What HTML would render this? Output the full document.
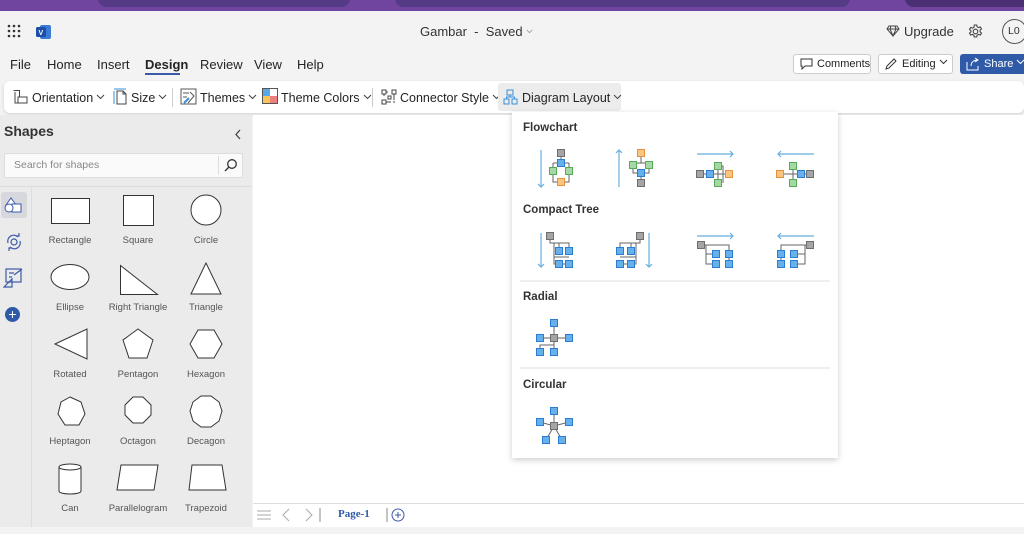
<!DOCTYPE html>
<html><head><meta charset="utf-8"><style>
*{margin:0;padding:0;box-sizing:border-box}
body{width:1024px;height:534px;overflow:hidden;background:#f3f3f3;font-family:"Liberation Sans",sans-serif;color:#242424;position:relative}
.a{position:absolute}
.t{font-size:12.5px;white-space:nowrap}
.cv{display:inline-block;width:9px;height:6px;margin-left:3px;vertical-align:2px}
.lbl{position:absolute;font-size:9.5px;color:#555;width:80px;text-align:center}
.hd{position:absolute;font-size:11.5px;font-weight:bold;color:#333}
</style></head><body>
<div class="a" style="left:0;top:0;width:1024px;height:11px;background:#70459f"></div>
<div class="a" style="left:98px;top:-10px;width:252px;height:17px;background:#553a85;border-radius:9px"></div>
<div class="a" style="left:395px;top:-10px;width:455px;height:17px;background:#553a85;border-radius:9px"></div>
<div class="a" style="left:905px;top:-10px;width:140px;height:17px;background:#4a2f73;border-radius:9px"></div>

<svg class="a" style="left:7px;top:24px" width="14" height="14"><g fill="#333"><circle cx="2" cy="2" r="1.3"/><circle cx="7" cy="2" r="1.3"/><circle cx="12" cy="2" r="1.3"/><circle cx="2" cy="7" r="1.3"/><circle cx="7" cy="7" r="1.3"/><circle cx="12" cy="7" r="1.3"/><circle cx="2" cy="12" r="1.3"/><circle cx="7" cy="12" r="1.3"/><circle cx="12" cy="12" r="1.3"/></g></svg>
<svg class="a" style="left:36px;top:24px" width="16" height="16"><rect x="4" y="1" width="11" height="14" rx="2" fill="#3a7bd5"/><rect x="0" y="3" width="10" height="10" rx="1.5" fill="#1d4fa6"/><text x="2.5" y="11" font-size="7" fill="#fff" font-family="Liberation Sans" font-weight="bold">V</text></svg>
<div class="a t" style="left:420px;top:24px;color:#333;font-size:13px">Gambar &nbsp;- &nbsp;Saved<svg class="cv" style="width:7px;height:5px" viewBox="0 0 9 6"><path d="M1 1l3.5 3.5L8 1" fill="none" stroke="#999"/></svg></div>
<svg class="a" style="left:886px;top:24px" width="14" height="14" fill="none" stroke="#444" stroke-width="1"><path d="M3 2h8l2 3-6 7-6-7z M1 5h12 M5 2l-1 3 3 7 3-7-1-3"/></svg>
<div class="a t" style="left:904px;top:24px;color:#333;font-size:13px">Upgrade</div>
<svg class="a" style="left:968px;top:24px" width="15" height="15" fill="none" stroke="#444" stroke-width="1.1"><circle cx="7.5" cy="7.5" r="2.3"/><path d="M6.3 1h2.4l.4 1.8 1.5.8 1.7-.7 1.2 2-1.4 1.2v1.8l1.4 1.2-1.2 2-1.7-.7-1.5.8-.4 1.8H6.3l-.4-1.8-1.5-.8-1.7.7-1.2-2 1.4-1.2V6.6L1.5 5.4l1.2-2 1.7.7 1.5-.8z"/></svg>
<div class="a" style="left:1002px;top:19px;width:25px;height:25px;border:1px solid #555;border-radius:50%;font-size:10.5px;line-height:23px;padding-left:5px;color:#333">L0</div>

<div class="a t" style="left:10px;top:57px;font-size:13px">File</div>
<div class="a t" style="left:47px;top:57px;font-size:13px">Home</div>
<div class="a t" style="left:97px;top:57px;font-size:13px">Insert</div>
<div class="a t" style="left:145px;top:57px;font-weight:bold;font-size:13px">Design</div>
<div class="a" style="left:145px;top:73px;width:35px;height:2px;background:#3b5aa8"></div>
<div class="a t" style="left:200px;top:57px;font-size:13px">Review</div>
<div class="a t" style="left:254px;top:57px;font-size:13px">View</div>
<div class="a t" style="left:297px;top:57px;font-size:13px">Help</div>

<div class="a" style="left:793px;top:54px;width:78px;height:20px;background:#fff;border:1px solid #ccc;border-radius:3px"></div>
<svg class="a" style="left:800px;top:58px" width="13" height="12" fill="none" stroke="#333"><path d="M1 1h11v7H5l-3 3V8H1z"/></svg>
<div class="a" style="left:817px;top:58px;font-size:11px">Comments</div>
<div class="a" style="left:878px;top:54px;width:75px;height:20px;background:#fff;border:1px solid #ccc;border-radius:3px"></div>
<svg class="a" style="left:884px;top:57px" width="14" height="14" fill="none" stroke="#333"><path d="M2 12l1-3 7-7 2 2-7 7z"/></svg>
<div class="a" style="left:902px;top:58px;font-size:11px;white-space:nowrap">Editing<svg class="cv" viewBox="0 0 9 6"><path d="M1 1l3.5 3.5L8 1" fill="none" stroke="#333"/></svg></div>
<div class="a" style="left:960px;top:54px;width:70px;height:20px;background:#2f5aa8;border-radius:3px"></div>
<svg class="a" style="left:966px;top:57px" width="14" height="14" fill="none" stroke="#fff"><path d="M1 5v8h11V9 M5 9c0-4 3-6 7-6 M9 1l3 2-3 2"/></svg>
<div class="a" style="left:984px;top:58px;font-size:11px;color:#fff;white-space:nowrap">Share<svg class="cv" viewBox="0 0 9 6"><path d="M1 1l3.5 3.5L8 1" fill="none" stroke="#fff"/></svg></div>

<div class="a" style="left:4px;top:81px;width:1020px;height:32px;background:#fff;border-radius:6px;box-shadow:0 1px 3px rgba(0,0,0,.15)"></div>
<svg class="a" style="left:12px;top:89px" width="16" height="16" fill="none" stroke="#444"><path d="M1.5 1.5h6v6 M3 3v11h3 M6 8h9v6H6z"/></svg>
<div class="a t" style="left:32px;top:91px">Orientation<svg class="cv" viewBox="0 0 9 6"><path d="M1 1l3.5 3.5L8 1" fill="none" stroke="#444"/></svg></div>
<svg class="a" style="left:113px;top:88px" width="15" height="17" fill="none" stroke="#444"><path d="M4 3h6l3 3v10H4z M10 3v3h3" /><path d="M1 1h12 M1 3v13" stroke="#3a8fd8"/></svg>
<div class="a t" style="left:131px;top:91px">Size<svg class="cv" viewBox="0 0 9 6"><path d="M1 1l3.5 3.5L8 1" fill="none" stroke="#444"/></svg></div>
<div class="a" style="left:172px;top:88px;width:1px;height:19px;background:#ccc"></div>
<svg class="a" style="left:180px;top:88px" width="17" height="17" fill="none" stroke="#555"><rect x="1" y="1" width="15" height="15"/><path d="M3 5h6 M3 9h4 M10 4l4 4-6 7"/><path d="M4 15l5-5" stroke="#3a8fd8" stroke-width="2"/></svg>
<div class="a t" style="left:200px;top:91px">Themes<svg class="cv" viewBox="0 0 9 6"><path d="M1 1l3.5 3.5L8 1" fill="none" stroke="#444"/></svg></div>
<svg class="a" style="left:262px;top:88px" width="16" height="16"><rect x="0.5" y="0.5" width="15" height="15" fill="#fff" stroke="#555"/><rect x="1" y="1" width="7" height="7" fill="#5aa9e6"/><rect x="8" y="1" width="7" height="7" fill="#fff"/><rect x="1" y="8" width="7" height="7" fill="#f7c55a"/><rect x="8" y="8" width="7" height="7" fill="#f08080"/></svg>
<div class="a t" style="left:281px;top:91px">Theme Colors<svg class="cv" viewBox="0 0 9 6"><path d="M1 1l3.5 3.5L8 1" fill="none" stroke="#444"/></svg></div>
<div class="a" style="left:372px;top:88px;width:1px;height:19px;background:#ccc"></div>
<svg class="a" style="left:381px;top:89px" width="16" height="16" fill="none" stroke="#444"><rect x="1" y="1" width="4" height="4"/><rect x="11" y="1" width="4" height="4"/><rect x="1" y="11" width="4" height="4"/><rect x="7" y="7" width="3" height="3"/><path d="M5 3h2 M3 5v2 M5 13h5 M13 5v6 M12 13h2"/></svg>
<div class="a t" style="left:400px;top:91px">Connector Style<svg class="cv" viewBox="0 0 9 6"><path d="M1 1l3.5 3.5L8 1" fill="none" stroke="#444"/></svg></div>
<div class="a" style="left:498px;top:83px;width:123px;height:28px;background:#ececec;border-radius:3px"></div>
<svg class="a" style="left:503px;top:89px" width="15" height="16" fill="none" stroke="#3a8fd8"><rect x="4" y="1" width="6" height="5"/><rect x="1" y="10" width="5" height="5"/><rect x="9" y="10" width="5" height="5"/><path d="M7 6v2H3.5v2 M7 8h4.5v2"/></svg>
<div class="a t" style="left:522px;top:91px">Diagram Layout<svg class="cv" viewBox="0 0 9 6"><path d="M1 1l3.5 3.5L8 1" fill="none" stroke="#444"/></svg></div>

<div class="a" style="left:0;top:115px;width:252px;height:412px;background:#ebebeb"></div>
<div class="a" style="left:4px;top:123px;font-size:14px;font-weight:bold;color:#333">Shapes</div>
<svg class="a" style="left:234px;top:129px" width="8" height="11" fill="none" stroke="#444" stroke-width="1.3"><path d="M6 1L2 5.5 6 10"/></svg>
<div class="a" style="left:4px;top:153px;width:239px;height:25px;background:#fafafa;border:1px solid #ddd;border-radius:2px"></div>
<div class="a" style="left:14px;top:159px;font-size:10.5px;color:#888">Search for shapes</div>
<div class="a" style="left:218px;top:156px;width:1px;height:19px;background:#ddd"></div>
<svg class="a" style="left:224px;top:158px" width="14" height="14" fill="none" stroke="#333" stroke-width="1.3"><circle cx="8" cy="6" r="4.3"/><path d="M5 9l-4 4"/></svg>
<div class="a" style="left:0;top:186px;width:252px;height:1px;background:#ddd"></div>
<div class="a" style="left:31px;top:187px;width:1px;height:340px;background:#ddd"></div>
<div class="a" style="left:1px;top:192px;width:26px;height:26px;background:#d7d7de;border-radius:3px"></div>
<svg class="a" style="left:4px;top:196px" width="20" height="18" fill="#fff" stroke="#3b5aa8"><path d="M2 9l5-7 5 7z"/><rect x="8" y="8" width="9" height="8"/><circle cx="5" cy="12" r="4"/></svg>
<svg class="a" style="left:4px;top:232px" width="20" height="20" fill="none" stroke="#3b5aa8" stroke-width="1.2"><path d="M4 11a6 6 0 0 1 10-6 M16 9a6 6 0 0 1-10 6 M12 4h3V1 M8 16H5v3"/><circle cx="10" cy="10" r="3"/></svg>
<svg class="a" style="left:3px;top:267px" width="22" height="22" fill="none" stroke="#3b5aa8" stroke-width="1.2"><rect x="3" y="2" width="15" height="13"/><path d="M1 20l8-8v8z M11 8l8-6 M6 6h5 M6 10h3"/></svg>
<div class="a" style="left:5px;top:307px;width:15px;height:15px;border-radius:50%;background:#2f5aa8;color:#fff;font-size:14px;line-height:14px;text-align:center">+</div>

<svg class="a" style="left:32px;top:187px" width="220" height="340" fill="#fff" stroke="#333" stroke-width="1">
<rect x="19.5" y="11.5" width="38" height="25"/>
<rect x="91.5" y="8.5" width="30" height="30"/>
<circle cx="174" cy="23" r="15"/>
<ellipse cx="38" cy="90" rx="19" ry="12.5"/>
<path d="M88.5 78.5v29h37z"/>
<path d="M174 76l-15 31h30z"/>
<path d="M23 157l32-15v30z"/>
<path d="M106 142l15 11-6 18h-18l-6-18z"/>
<path d="M166 143h16l8 14-8 14h-16l-8-14z"/>
<path d="M38 210l11 5 4 12-6 11h-14l-7-11 3-12z"/>
<path d="M101 210h10l8 8v10l-8 8h-10l-8-8v-10z"/>
<path d="M169 209h10l8 6 3 9-3 10-8 6h-10l-8-6-3-10 3-9z"/>
<path d="M27 280v24c0 4 22 4 22 0v-24"/><ellipse cx="38" cy="280" rx="11" ry="3"/>
<path d="M89 278h37l-4 25h-37z"/>
<path d="M160 278h30l4 25h-37z"/>
</svg>
<div class="lbl" style="left:30px;top:235px">Rectangle</div>
<div class="lbl" style="left:98px;top:235px">Square</div>
<div class="lbl" style="left:166px;top:235px">Circle</div>
<div class="lbl" style="left:30px;top:302px">Ellipse</div>
<div class="lbl" style="left:98px;top:302px">Right Triangle</div>
<div class="lbl" style="left:166px;top:302px">Triangle</div>
<div class="lbl" style="left:30px;top:369px">Rotated</div>
<div class="lbl" style="left:98px;top:369px">Pentagon</div>
<div class="lbl" style="left:166px;top:369px">Hexagon</div>
<div class="lbl" style="left:30px;top:436px">Heptagon</div>
<div class="lbl" style="left:98px;top:436px">Octagon</div>
<div class="lbl" style="left:166px;top:436px">Decagon</div>
<div class="lbl" style="left:30px;top:503px">Can</div>
<div class="lbl" style="left:98px;top:503px">Parallelogram</div>
<div class="lbl" style="left:166px;top:503px">Trapezoid</div>

<div class="a" style="left:253px;top:115px;width:771px;height:388px;background:#fff"></div>
<div class="a" style="left:253px;top:503px;width:771px;height:1px;background:#ddd"></div>
<div class="a" style="left:253px;top:504px;width:771px;height:23px;background:#fff"></div>
<svg class="a" style="left:256px;top:507px" width="150" height="16" fill="none" stroke="#aaa"><path d="M1 4h14 M1 8h14 M1 12h14 M33 2l-6 6 6 6 M50 2l6 6-6 6" /><path d="M64 1v14 M131 1v14" stroke="#888"/><circle cx="142" cy="8" r="6" stroke="#3b5aa8"/><path d="M142 5v6 M139 8h6" stroke="#3b5aa8"/></svg>
<div class="a" style="left:338px;top:508px;font-family:'Liberation Serif',serif;font-size:11px;font-weight:bold;color:#2f5aa8">Page-1</div>

<div class="a" style="left:512px;top:112px;width:326px;height:346px;background:#fff;box-shadow:0 2px 6px rgba(0,0,0,.2)"></div>
<div class="hd" style="left:523px;top:122px">Flowchart</div>
<div class="hd" style="left:523px;top:204px">Compact Tree</div>
<div class="hd" style="left:523px;top:291px">Radial</div>
<div class="hd" style="left:523px;top:379px">Circular</div>
<svg class="a" style="left:512px;top:112px" width="326" height="346">
<defs>
<g id="bl"><rect x="-3.5" y="-3.5" width="7" height="7" fill="#67b0ea" stroke="#2b7cd3"/></g>
<g id="gr"><rect x="-3.5" y="-3.5" width="7" height="7" fill="#a5a5a5" stroke="#6e6e6e"/></g>
<g id="gn"><rect x="-3.5" y="-3.5" width="7" height="7" fill="#a4d9a4" stroke="#5aa85a"/></g>
<g id="or"><rect x="-3.5" y="-3.5" width="7" height="7" fill="#f8c680" stroke="#e8913a"/></g>
</defs>
<path d="M8 169h310 M8 256h310" stroke="#ddd"/>
<g fill="none" stroke="#67aee0" stroke-width="1.2">
<path d="M29 38v37 M26 72l3 3 3-3"/>
<path d="M107 75V38 M104 41l3-3 3 3"/>
<path d="M185 42h36 M218 39l3 3-3 3"/>
<path d="M302 42h-36 M269 39l-3 3 3 3"/>
<path d="M29 121v34 M26 152l3 3 3-3"/>
<path d="M137 121v34 M134 152l3 3 3-3"/>
<path d="M185 124h36 M218 121l3 3-3 3"/>
<path d="M302 124h-36 M269 121l-3 3 3 3"/>
</g>
<g fill="none" stroke="#666" stroke-width="1">
<path d="M49 41v10 M41 51h16 M41 51v19h16v-19 M49 66v4"/>
<path d="M129 41v10 M121 51h16 M121 51v10h16v-10 M129 61v10"/>
<path d="M188 62h10 M206 54v17 M198 62h19 M206 54h5v17"/>
<path d="M298 62h-9 M281 54v17 M289 62h-21"/>
<path d="M38 124v7h19v8 M47 131v8 M42 131v21h15 M42 145h15"/>
<path d="M128 124v7h-20v8 M119 131v8 M124 131v21h-16 M124 145h-16"/>
<path d="M189 133h28v19 M194 133v19h10 M194 142h10"/>
<path d="M298 133h-29v19 M293 133v19h-11 M293 142h-11"/>
<path d="M42 211v29 M28 226h29 M28 240v-7h14"/>
<path d="M42 299v15 M28 310l14 4 15-4 M34 328l8-14 8 14"/>
</g>
<use href="#gr" x="49" y="41"/><use href="#bl" x="49" y="51"/><use href="#gn" x="41" y="59"/><use href="#gn" x="57" y="59"/><use href="#or" x="49" y="70"/>
<use href="#or" x="129" y="41"/><use href="#gn" x="121" y="53"/><use href="#gn" x="137" y="53"/><use href="#bl" x="129" y="61"/><use href="#gr" x="129" y="71"/>
<use href="#gr" x="188" y="62"/><use href="#bl" x="198" y="62"/><use href="#gn" x="206" y="54"/><use href="#gn" x="206" y="71"/><use href="#or" x="217" y="62"/>
<use href="#or" x="268" y="62"/><use href="#gn" x="281" y="54"/><use href="#gn" x="281" y="71"/><use href="#bl" x="289" y="62"/><use href="#gr" x="298" y="62"/>
<use href="#gr" x="38" y="124"/><use href="#bl" x="47" y="139"/><use href="#bl" x="57" y="139"/><use href="#bl" x="47" y="152"/><use href="#bl" x="57" y="152"/>
<use href="#gr" x="128" y="124"/><use href="#bl" x="108" y="139"/><use href="#bl" x="119" y="139"/><use href="#bl" x="108" y="152"/><use href="#bl" x="119" y="152"/>
<use href="#gr" x="189" y="133"/><use href="#bl" x="204" y="142"/><use href="#bl" x="217" y="142"/><use href="#bl" x="204" y="152"/><use href="#bl" x="217" y="152"/>
<use href="#gr" x="298" y="133"/><use href="#bl" x="269" y="142"/><use href="#bl" x="282" y="142"/><use href="#bl" x="269" y="152"/><use href="#bl" x="282" y="152"/>
<use href="#gr" x="42" y="226"/><use href="#bl" x="42" y="211"/><use href="#bl" x="28" y="226"/><use href="#bl" x="57" y="226"/><use href="#bl" x="28" y="240"/><use href="#bl" x="42" y="240"/>
<use href="#gr" x="42" y="314"/><use href="#bl" x="42" y="299"/><use href="#bl" x="28" y="310"/><use href="#bl" x="57" y="310"/><use href="#bl" x="34" y="328"/><use href="#bl" x="50" y="328"/>
</svg>
</body></html>
